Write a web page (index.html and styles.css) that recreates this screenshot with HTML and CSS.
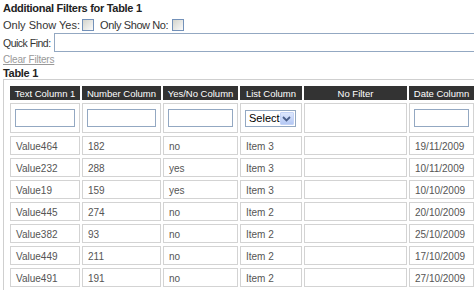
FILE: index.html
```html
<!DOCTYPE html>
<html>
<head>
<meta charset="utf-8">
<link rel="stylesheet" href="styles.css">
</head>
<body>
<div class="title">Additional Filters for Table 1</div>
<div class="opts">
  <span>Only Show Yes:</span><span class="chk chk-yes"></span>
  <span class="no-label">Only Show No:</span><span class="chk chk-no"></span>
</div>
<div class="qf">
  <span class="qf-label">Quick Find:</span>
  <span class="qf-input"></span>
</div>
<a class="clear">Clear Filters</a>
<div class="title tname">Table 1</div>
<div class="wrap">
<table class="grid">
  <thead>
    <tr>
      <th class="w1">Text Column 1</th>
      <th class="w2">Number Column</th>
      <th class="w3">Yes/No Column</th>
      <th class="w4">List Column</th>
      <th class="w5">No Filter</th>
      <th class="w6">Date Column</th>
    </tr>
    <tr class="filters">
      <td><span class="fin"></span></td>
      <td><span class="fin"></span></td>
      <td><span class="fin"></span></td>
      <td><div class="sel"><span class="sel-text">Select</span><span class="sel-btn"><svg width="9" height="6" viewBox="0 0 9 6"><path d="M1 1 L4.5 4.5 L8 1" fill="none" stroke="#4a5f8a" stroke-width="1.8"/></svg></span></div></td>
      <td></td>
      <td><span class="fin"></span></td>
    </tr>
  </thead>
  <tbody>
    <tr><td>Value464</td><td>182</td><td>no</td><td>Item 3</td><td></td><td>19/11/2009</td></tr>
    <tr><td>Value232</td><td>288</td><td>yes</td><td>Item 3</td><td></td><td>10/11/2009</td></tr>
    <tr><td>Value19</td><td>159</td><td>yes</td><td>Item 3</td><td></td><td>10/10/2009</td></tr>
    <tr><td>Value445</td><td>274</td><td>no</td><td>Item 2</td><td></td><td>20/10/2009</td></tr>
    <tr><td>Value382</td><td>93</td><td>no</td><td>Item 2</td><td></td><td>25/10/2009</td></tr>
    <tr><td>Value449</td><td>211</td><td>no</td><td>Item 2</td><td></td><td>17/10/2009</td></tr>
    <tr><td>Value491</td><td>191</td><td>no</td><td>Item 2</td><td></td><td>27/10/2009</td></tr>
  </tbody>
</table>
</div>
</body>
</html>
```
FILE: styles.css
```css
html, body {
  margin: 0;
  overflow: hidden;
  background: #fff;
}
body {
  font-family: "Liberation Sans", Arial, sans-serif;
  color: #333;
  padding-left: 3px;
  width: 490px;
}
.title {
  margin-top: 2px;
  font-size: 11px;
  font-weight: bold;
  line-height: 13px;
  letter-spacing: -0.3px;
  color: #222;
}
.opts {
  display: flex;
  align-items: center;
  height: 14px;
  margin-top: 3px;
  font-size: 11px;
  line-height: 14px;
  white-space: nowrap;
}
.no-label {
  letter-spacing: -0.4px;
}
.chk {
  display: block;
  width: 12px;
  height: 12px;
  box-sizing: border-box;
  border: 1px solid #7391b9;
  background: linear-gradient(135deg, #d4d4cc, #fafafa);
}
.chk-yes { margin: 0 6px 0 2px; }
.chk-no { margin: 0 0 0 4px; }
.qf {
  display: flex;
  align-items: flex-start;
  height: 19px;
  margin-top: 1px;
}
.qf-label {
  flex: none;
  white-space: nowrap;
  font-size: 10.5px;
  letter-spacing: -0.5px;
  line-height: 15px;
  padding-top: 3px;
}
.qf-input {
  display: block;
  margin-left: 3px;
  width: 440px;
  flex: none;
  height: 19px;
  box-sizing: border-box;
  border: 1px solid #93a8c2;
  background: #fff;
}
.clear {
  display: block;
  margin-top: 1px;
  font-size: 10px;
  letter-spacing: -0.2px;
  line-height: 14px;
  color: #999;
  text-decoration: underline;
}
.tname {
  margin-top: 1px;
  line-height: 11px;
}
.wrap {
  border: 1px solid #cfcfcf;
  padding: 3px 4px;
  width: 480px;
}
.grid {
  border-collapse: separate;
  border-spacing: 2px 3px;
  table-layout: fixed;
  width: 468px;
}
.grid th, .grid td {
  box-sizing: border-box;
}
.grid th {
  background: #333;
  color: #fff;
  font-size: 9.5px;
  font-weight: normal;
  border: 1px solid #333;
  padding: 2px 0 0;
  line-height: 10px;
  text-align: center;
  white-space: nowrap;
  overflow: hidden;
}
.w1 { width: 70px; }
.w2 { width: 79px; }
.w3 { width: 75px; }
.w4 { width: 62px; }
.w5 { width: 103px; }
.w6 { width: 65px; }
.grid td {
  border: 1px solid #d3d3d3;
  padding: 2px 4px 0 5px;
  font-size: 10px;
  line-height: 15px;
  color: #555;
  white-space: nowrap;
  overflow: hidden;
}
.grid .filters td {
  padding: 5px 4px;
  line-height: 18px;
  vertical-align: top;
}
.fin {
  display: block;
  height: 18px;
  box-sizing: border-box;
  border: 1px solid #93a8c2;
  background: #fff;
}
.sel {
  display: flex;
  align-items: center;
  width: 51px;
  height: 17px;
  margin-top: 1px;
  box-sizing: border-box;
  border: 1px solid #93a8c2;
  background: #fff;
}
.sel-text {
  flex: 1;
  padding-left: 3px;
  font-size: 11px;
  line-height: 15px;
  color: #000;
}
.sel-btn {
  display: flex;
  align-items: center;
  justify-content: center;
  width: 15px;
  height: 13px;
  margin-right: 1px;
  box-sizing: border-box;
  border: 1px solid #c4d3f6;
  border-radius: 1px;
  background: linear-gradient(#dde7fd, #b4c8f4);
}
```
